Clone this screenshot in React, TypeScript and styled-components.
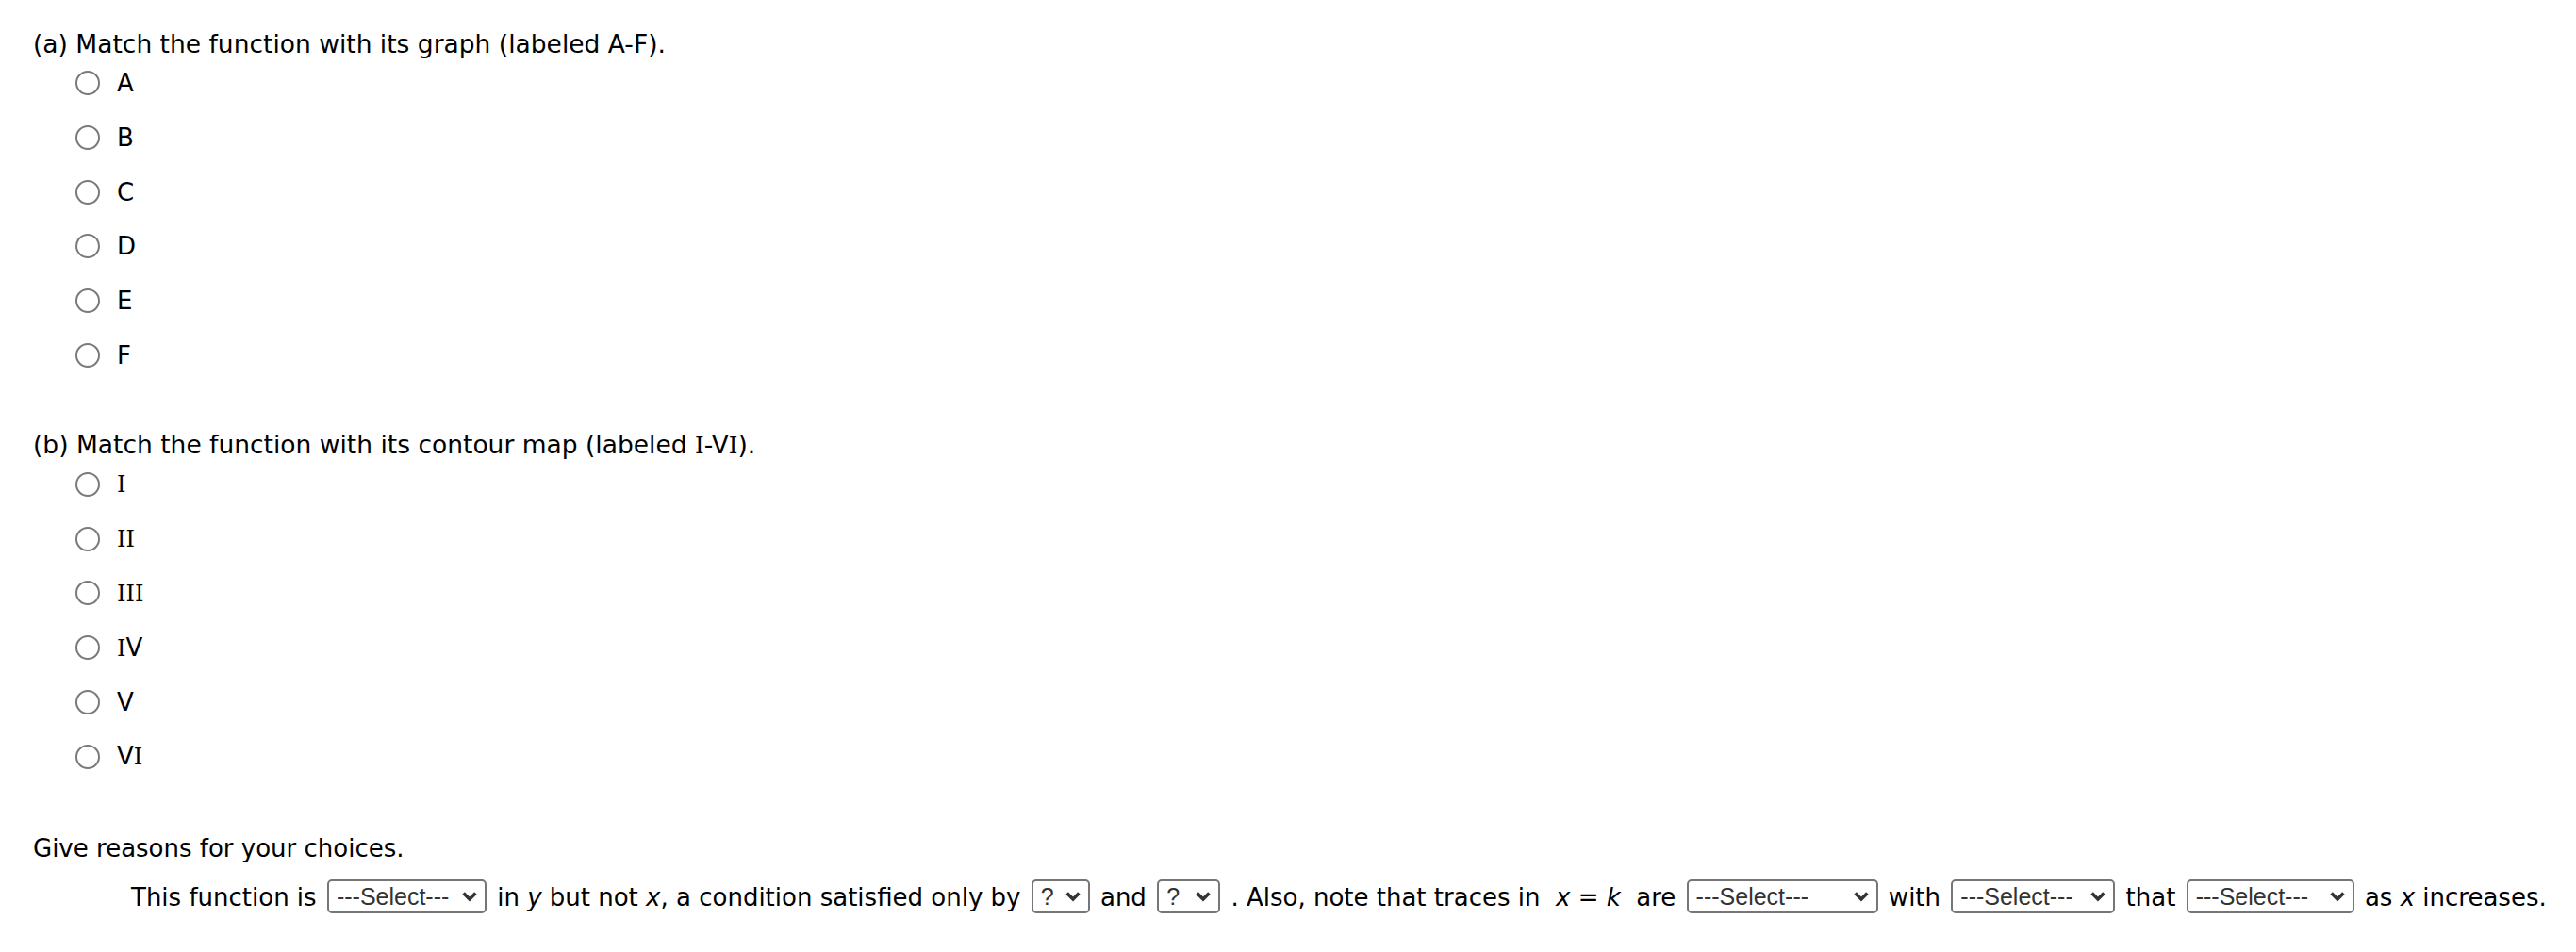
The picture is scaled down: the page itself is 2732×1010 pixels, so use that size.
import React from 'react';
import styled, { createGlobalStyle } from 'styled-components';

const GlobalStyle = createGlobalStyle`
  html, body {
    margin: 0;
    padding: 0;
    background: #fff;
  }
  body {
    font-family: "DejaVu Sans", Verdana, sans-serif;
    color: #000;
  }
`;

const Page = styled.div`
  padding: 29px 0 0 35px;
  font-size: 26px;
`;

const Question = styled.div`
  font-size: 26.5px;
  line-height: 36px;
  white-space: nowrap;
`;

const RomanI = styled.span`
  font-family: "DejaVu Serif", serif;
  font-size: 0.92em;
`;

const OptionList = styled.div<{ $after: number }>`
  display: flex;
  flex-direction: column;
  gap: 11.75px;
  padding-left: 45px;
  margin-bottom: ${(p) => p.$after}px;
`;

const Option = styled.label`
  display: flex;
  align-items: center;
  height: 46px;
  gap: 18px;
  line-height: 46px;
`;

const Radio = styled.input.attrs({ type: 'radio' })`
  appearance: none;
  margin: 0;
  width: 26px;
  height: 26px;
  box-sizing: border-box;
  border: 2px solid #7a7a7a;
  border-radius: 50%;
  background: #fff;
  flex: none;
`;

const Reasons = styled.div`
  line-height: 36px;
`;

const Sentence = styled.div`
  margin-top: 14px;
  padding-left: 104px;
  line-height: 40px;
  white-space: nowrap;
`;

const Var = styled.i`
  font-style: italic;
`;

const SelectWrap = styled.span`
  position: relative;
  display: inline-block;
  vertical-align: middle;
  margin: -4px 3px 0;
`;

const Dropdown = styled.select<{ $w: number }>`
  appearance: none;
  width: ${(p) => p.$w}px;
  height: 36px;
  box-sizing: border-box;
  border: 2px solid #767676;
  border-radius: 5px;
  background: #fff;
  padding: 0 0 0 8px;
  font-family: "Liberation Sans", Arial, sans-serif;
  font-size: 25px;
  color: #333;
  display: block;
`;

const Chevron = styled.svg`
  position: absolute;
  right: 9px;
  top: 12px;
  width: 18px;
  height: 12px;
  pointer-events: none;
`;

type SelProps = { w: number; label: string };

const Select = ({ w, label }: SelProps) => (
  <SelectWrap>
    <Dropdown $w={w} defaultValue="">
      <option value="">{label}</option>
    </Dropdown>
    <Chevron viewBox="0 0 18 12">
      <path d="M2.6 2.6 L9 9 L15.4 2.6" fill="none" stroke="#333" strokeWidth="3.6" />
    </Chevron>
  </SelectWrap>
);

const graphs = ['A', 'B', 'C', 'D', 'E', 'F'];
const maps = ['I', 'II', 'III', 'IV', 'V', 'VI'];

const roman = (s: string) =>
  s.split('').map((c, i) => (c === 'I' ? <RomanI key={i}>I</RomanI> : <span key={i}>{c}</span>));

export default function App() {
  return (
    <>
      <GlobalStyle />
      <Page>
        <Question>(a) Match the function with its graph (labeled A-F).</Question>
        <OptionList $after={54}>
          {graphs.map((g) => (
            <Option key={g}>
              <Radio name="graph" />
              {g}
            </Option>
          ))}
        </OptionList>

        <Question>
          (b) Match the function with its contour map (labeled <RomanI>I</RomanI>-V<RomanI>I</RomanI>).
        </Question>
        <OptionList $after={56}>
          {maps.map((m) => (
            <Option key={m}>
              <Radio name="contour" />
              <span>{roman(m)}</span>
            </Option>
          ))}
        </OptionList>

        <Reasons>Give reasons for your choices.</Reasons>
        <Sentence>
          This function is <Select w={169} label="---Select---" /> in <Var>y</Var> but not <Var>x</Var>, a
          condition satisfied only by <Select w={62} label="?" /> and <Select w={67} label="?" /> . Also, note
          that traces in&nbsp; <Var>x</Var> = <Var>k</Var>&nbsp; are <Select w={203} label="---Select---" /> with{' '}
          <Select w={174} label="---Select---" /> that <Select w={178} label="---Select---" /> as <Var>x</Var>{' '}
          increases.
        </Sentence>
      </Page>
    </>
  );
}
